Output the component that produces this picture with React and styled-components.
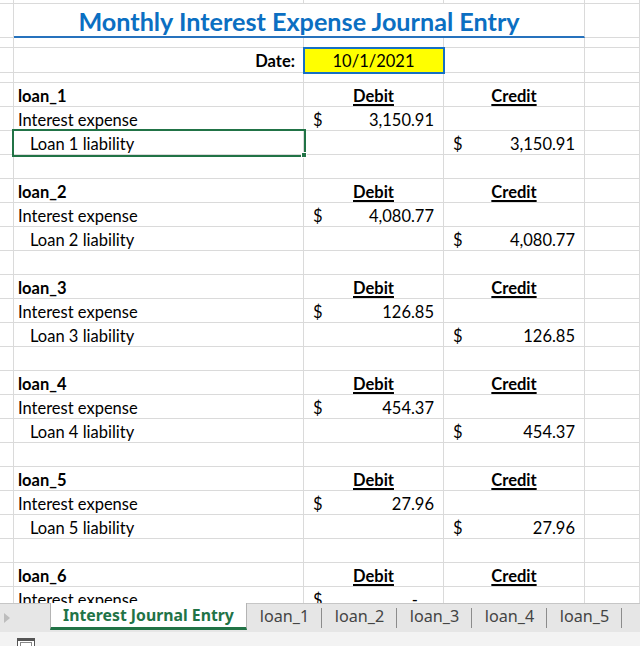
import styled, { createGlobalStyle } from "styled-components";

const GlobalStyle = createGlobalStyle`
  html, body {
    margin: 0;
    padding: 0;
    background: #ffffff;
  }
  body {
    width: 640px;
    height: 646px;
    overflow: hidden;
    font-family: Lato, "Noto Sans", "Liberation Sans", sans-serif;
    color: #000;
  }
  * { box-sizing: border-box; }
`;

const Window = styled.div`
  width: 640px;
  height: 646px;
  display: flex;
  flex-direction: column;
  overflow: hidden;
`;

const Sheet = styled.div`
  height: 603px;
  flex: none;
  overflow: hidden;
`;

const Row = styled.div`
  display: grid;
  grid-template-columns: 14px 290px 140px 141px 1fr;
  height: ${(p) => p.$h}px;
`;

const Cell = styled.div`
  position: relative;
  display: flex;
  align-items: center;
  min-width: 0;
  white-space: nowrap;
  font-size: 16.5px;
  border-right: 1px solid #dadada;
  border-bottom: 1px solid #dadada;
  padding-top: 2px;
  padding-left: ${(p) => p.$indent ?? 4}px;
  font-weight: ${(p) => (p.$bold ? 700 : 400)};
  justify-content: ${(p) => p.$align || "flex-start"};
`;

const TitleCell = styled.div`
  grid-column: span 3;
  display: flex;
  align-items: center;
  justify-content: center;
  border-bottom: 2px solid #2672bd;
  border-right: 1px solid #dadada;
  color: #0b6fc2;
  font-weight: 700;
  font-size: 25.2px;
  padding-top: 1px;
`;

const DateLabel = styled(Cell)`
  justify-content: flex-end;
  padding-right: 8px;
  font-weight: 700;
`;

const DateValue = styled(Cell)`
  justify-content: center;
  padding-left: 0;
  background: #ffff00;
  outline: 2px solid #1670c4;
  outline-offset: -1px;
  z-index: 1;
`;

const Header = styled.span`
  font-weight: 700;
  text-decoration: underline;
  text-decoration-thickness: 1.5px;
  text-underline-offset: 2px;
`;

const Money = styled(Cell)`
  justify-content: space-between;
  padding-left: 9px;
  padding-right: ${(p) => (p.$zero ? 25 : 9)}px;
`;

const Selected = styled(Cell)`
  outline: 2px solid #217346;
  outline-offset: 0;
  z-index: 2;
`;

const FillHandle = styled.span`
  position: absolute;
  right: -4px;
  bottom: -4px;
  width: 6px;
  height: 6px;
  background: #217346;
  border: 1px solid #fff;
`;

const TabBar = styled.div`
  height: 29px;
  flex: none;
  display: flex;
  align-items: flex-start;
  background: #e6e6e6;
  border-top: 1px solid #c6c6c6;
`;

const Nav = styled.div`
  width: 50px;
  height: 28px;
  display: flex;
  align-items: center;
  padding-left: 4px;
`;

const ActiveTab = styled.div`
  width: 197px;
  height: 27px;
  margin-top: -1px;
  background: #fff;
  border-left: 1px solid #b4b4b4;
  border-right: 1px solid #b4b4b4;
  border-bottom: 3px solid #217346;
  display: flex;
  align-items: center;
  justify-content: center;
  font-family: "Noto Sans", sans-serif;
  font-weight: 700;
  font-size: 15.8px;
  color: #217346;
  padding-bottom: 1px;
`;

const Tab = styled.div`
  position: relative;
  width: 75px;
  height: 28px;
  display: flex;
  align-items: center;
  justify-content: center;
  font-family: "Noto Sans", sans-serif;
  font-size: 16.2px;
  color: #444;
  padding-bottom: 4px;

  &::after {
    content: "";
    position: absolute;
    right: 0;
    top: 4px;
    height: 20px;
    width: 1px;
    background: #8c8c8c;
  }
`;

const StatusStrip = styled.div`
  flex: 1;
  background: #f3f3f3;
  padding: 6px 0 0 17px;
  line-height: 0;
`;

const loans = [
  { name: "loan_1", amount: "3,150.91", selected: true },
  { name: "loan_2", amount: "4,080.77" },
  { name: "loan_3", amount: "126.85" },
  { name: "loan_4", amount: "454.37" },
  { name: "loan_5", amount: "27.96" },
  { name: "loan_6", amount: null },
];

const Plain = ({ h }) => (
  <Row $h={h}>
    <Cell />
    <Cell />
    <Cell />
    <Cell />
    <Cell />
  </Row>
);

const LoanBlock = ({ loan, index }) => {
  const Liability = loan.selected ? Selected : Cell;
  return (
    <>
      <Row $h={24}>
        <Cell />
        <Cell $bold>{loan.name}</Cell>
        <Cell $align="center" $indent={0}>
          <Header>Debit</Header>
        </Cell>
        <Cell $align="center" $indent={0}>
          <Header>Credit</Header>
        </Cell>
        <Cell />
      </Row>
      <Row $h={24}>
        <Cell />
        <Cell>Interest expense</Cell>
        <Money $zero={!loan.amount}>
          <span>$</span>
          <span>{loan.amount || "-"}</span>
        </Money>
        <Cell />
        <Cell />
      </Row>
      <Row $h={24}>
        <Cell />
        <Liability $indent={16}>
          Loan {index + 1} liability
          {loan.selected && <FillHandle />}
        </Liability>
        <Cell />
        <Money $zero={!loan.amount}>
          <span>$</span>
          <span>{loan.amount || "-"}</span>
        </Money>
        <Cell />
      </Row>
      <Plain h={24} />
    </>
  );
};

const App = () => {
  return (
    <Window>
      <GlobalStyle />
      <Sheet>
        <Plain h={4} />
        <Row $h={34}>
          <Cell />
          <TitleCell>Monthly Interest Expense Journal Entry</TitleCell>
          <Cell />
        </Row>
        <Plain h={10} />
        <Row $h={25}>
          <Cell />
          <DateLabel>Date:</DateLabel>
          <DateValue>10/1/2021</DateValue>
          <Cell />
          <Cell />
        </Row>
        <Plain h={10} />
        {loans.map((loan, i) => (
          <LoanBlock key={loan.name} loan={loan} index={i} />
        ))}
      </Sheet>
      <TabBar>
        <Nav>
          <svg width="6" height="10" viewBox="0 0 6 10">
            <path d="M0 0 L6 5 L0 10 Z" fill="#bdbdbd" />
          </svg>
        </Nav>
        <ActiveTab>Interest Journal Entry</ActiveTab>
        {["loan_1", "loan_2", "loan_3", "loan_4", "loan_5"].map((t) => (
          <Tab key={t}>{t}</Tab>
        ))}
      </TabBar>
      <StatusStrip>
        <svg width="18" height="8" viewBox="0 0 18 8">
          <rect x="0.5" y="0.5" width="17" height="10" fill="#ffffff" stroke="#555" />
          <rect x="0" y="0" width="18" height="3" fill="#555" />
          <rect x="3.5" y="4.5" width="11" height="6" fill="none" stroke="#888" />
        </svg>
      </StatusStrip>
    </Window>
  );
};

export default App;
